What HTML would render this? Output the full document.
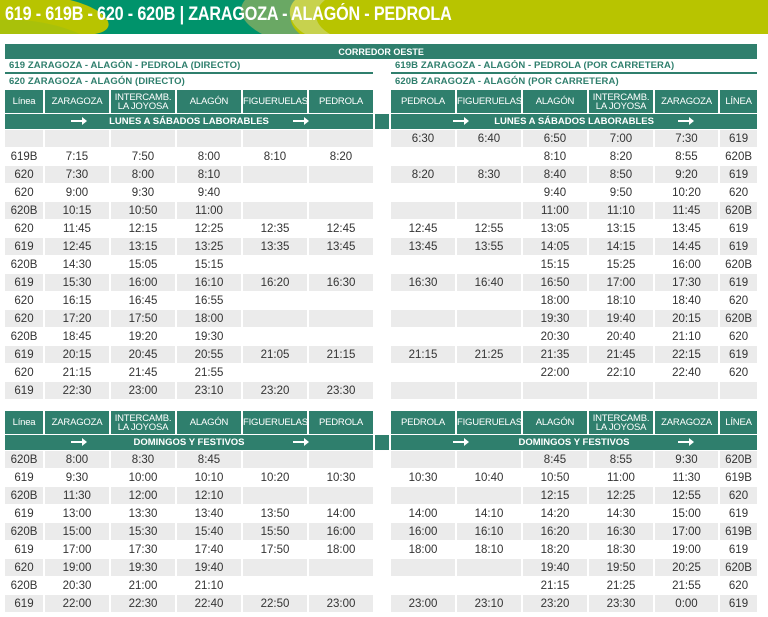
<!DOCTYPE html>
<html><head><meta charset="utf-8"><style>
*{margin:0;padding:0;box-sizing:border-box}
body{width:768px;height:617px;background:#fff;position:relative;overflow:hidden;font-family:"Liberation Sans",sans-serif;color:#333}
#hdr{position:absolute;left:0;top:0;width:768px;height:34px}
#ttl{position:absolute;left:5px;top:4px;color:#fff;font-weight:bold;font-size:19px;white-space:nowrap;transform:scaleX(0.85);transform-origin:0 0;letter-spacing:-0.2px}
table{position:absolute;left:3px;border-collapse:separate;border-spacing:2px 1px;table-layout:fixed;width:756px}
td{height:17px;text-align:center;font-size:11.5px;padding:0;overflow:hidden;white-space:nowrap}
tr.g td{background:#ebebeb}
tr.g td.x,tr td.x{background:#fff}
tr.h td{background:#2f7f6d;color:#fff;font-size:9.5px;height:23px;line-height:9px;letter-spacing:-0.2px}
tr.h td.x{background:#fff}
tr.b td{background:#2f7f6d;color:#fff;font-size:9.5px;font-weight:bold;height:15px;position:relative}
tr.c td{background:#2f7f6d;color:#fff;font-size:9px;font-weight:bold;height:15px}
tr.s td{color:#2f7f6d;font-size:9.5px;font-weight:bold;text-align:left;padding-left:4px;height:14px;line-height:12px;letter-spacing:0.1px}
tr.s1 td.l{border-bottom:2px solid #2f7f6d}
.ar{position:absolute;top:3px;width:16px;height:8px}
</style></head><body>
<div id="hdr"><svg width="768" height="34"><rect width="768" height="34" fill="#b8c400"/><path d="M70 0 C110 10 120 30 95 34 L270 34 C250 22 240 10 255 0 Z" fill="#00936b"/><path d="M245 0 C235 12 245 25 262 34 L300 34 C285 22 290 8 300 0 Z" fill="#6aa864"/><path d="M295 0 C285 10 290 25 305 34 L330 34 C310 22 315 8 325 0Z" fill="#c7d24e"/><path d="M0 20 C30 18 60 25 80 34 L0 34Z" fill="#a9c10a"/></svg>
<div id="ttl">619 - 619B - 620 - 620B | ZARAGOZA - ALAGÓN - PEDROLA</div></div>

<table style="top:43px">
<colgroup><col style="width:38px"><col style="width:64px"><col style="width:64px"><col style="width:64px"><col style="width:64px"><col style="width:64px"><col style="width:14px"><col style="width:64px"><col style="width:64px"><col style="width:64px"><col style="width:64px"><col style="width:63px"><col style="width:37px"></colgroup>
<tr class="c"><td colspan="13">CORREDOR OESTE</td></tr>
<tr class="s s1"><td colspan="6" class="l">619 ZARAGOZA - ALAGÓN - PEDROLA (DIRECTO)</td><td></td><td colspan="6" class="l">619B ZARAGOZA - ALAGÓN - PEDROLA (POR CARRETERA)</td></tr>
<tr class="s"><td colspan="6">620 ZARAGOZA - ALAGÓN (DIRECTO)</td><td></td><td colspan="6">620B ZARAGOZA - ALAGÓN (POR CARRETERA)</td></tr>
<tr class="h"><td>Línea</td><td>ZARAGOZA</td><td>INTERCAMB.<br>LA JOYOSA</td><td>ALAGÓN</td><td>FIGUERUELAS</td><td>PEDROLA</td><td class="x"></td><td>PEDROLA</td><td>FIGUERUELAS</td><td>ALAGÓN</td><td>INTERCAMB.<br>LA JOYOSA</td><td>ZARAGOZA</td><td>LÍNEA</td></tr>
<tr class="b"><td colspan="6"><svg class="ar" style="left:66px" viewBox="0 0 16 8"><path d="M0 3h11V0l5 4-5 4V5H0z" fill="#fff"/></svg>LUNES A SÁBADOS LABORABLES<svg class="ar" style="left:288px" viewBox="0 0 16 8"><path d="M0 3h11V0l5 4-5 4V5H0z" fill="#fff"/></svg></td><td></td><td colspan="6"><svg class="ar" style="left:62px" viewBox="0 0 16 8"><path d="M0 3h11V0l5 4-5 4V5H0z" fill="#fff"/></svg>LUNES A SÁBADOS LABORABLES<svg class="ar" style="left:287px" viewBox="0 0 16 8"><path d="M0 3h11V0l5 4-5 4V5H0z" fill="#fff"/></svg></td></tr>
<tr class="g"><td></td><td></td><td></td><td></td><td></td><td></td><td class="x"></td><td>6:30</td><td>6:40</td><td>6:50</td><td>7:00</td><td>7:30</td><td>619</td></tr>
<tr><td>619B</td><td>7:15</td><td>7:50</td><td>8:00</td><td>8:10</td><td>8:20</td><td class="x"></td><td></td><td></td><td>8:10</td><td>8:20</td><td>8:55</td><td>620B</td></tr>
<tr class="g"><td>620</td><td>7:30</td><td>8:00</td><td>8:10</td><td></td><td></td><td class="x"></td><td>8:20</td><td>8:30</td><td>8:40</td><td>8:50</td><td>9:20</td><td>619</td></tr>
<tr><td>620</td><td>9:00</td><td>9:30</td><td>9:40</td><td></td><td></td><td class="x"></td><td></td><td></td><td>9:40</td><td>9:50</td><td>10:20</td><td>620</td></tr>
<tr class="g"><td>620B</td><td>10:15</td><td>10:50</td><td>11:00</td><td></td><td></td><td class="x"></td><td></td><td></td><td>11:00</td><td>11:10</td><td>11:45</td><td>620B</td></tr>
<tr><td>620</td><td>11:45</td><td>12:15</td><td>12:25</td><td>12:35</td><td>12:45</td><td class="x"></td><td>12:45</td><td>12:55</td><td>13:05</td><td>13:15</td><td>13:45</td><td>619</td></tr>
<tr class="g"><td>619</td><td>12:45</td><td>13:15</td><td>13:25</td><td>13:35</td><td>13:45</td><td class="x"></td><td>13:45</td><td>13:55</td><td>14:05</td><td>14:15</td><td>14:45</td><td>619</td></tr>
<tr><td>620B</td><td>14:30</td><td>15:05</td><td>15:15</td><td></td><td></td><td class="x"></td><td></td><td></td><td>15:15</td><td>15:25</td><td>16:00</td><td>620B</td></tr>
<tr class="g"><td>619</td><td>15:30</td><td>16:00</td><td>16:10</td><td>16:20</td><td>16:30</td><td class="x"></td><td>16:30</td><td>16:40</td><td>16:50</td><td>17:00</td><td>17:30</td><td>619</td></tr>
<tr><td>620</td><td>16:15</td><td>16:45</td><td>16:55</td><td></td><td></td><td class="x"></td><td></td><td></td><td>18:00</td><td>18:10</td><td>18:40</td><td>620</td></tr>
<tr class="g"><td>620</td><td>17:20</td><td>17:50</td><td>18:00</td><td></td><td></td><td class="x"></td><td></td><td></td><td>19:30</td><td>19:40</td><td>20:15</td><td>620B</td></tr>
<tr><td>620B</td><td>18:45</td><td>19:20</td><td>19:30</td><td></td><td></td><td class="x"></td><td></td><td></td><td>20:30</td><td>20:40</td><td>21:10</td><td>620</td></tr>
<tr class="g"><td>619</td><td>20:15</td><td>20:45</td><td>20:55</td><td>21:05</td><td>21:15</td><td class="x"></td><td>21:15</td><td>21:25</td><td>21:35</td><td>21:45</td><td>22:15</td><td>619</td></tr>
<tr><td>620</td><td>21:15</td><td>21:45</td><td>21:55</td><td></td><td></td><td class="x"></td><td></td><td></td><td>22:00</td><td>22:10</td><td>22:40</td><td>620</td></tr>
<tr class="g"><td>619</td><td>22:30</td><td>23:00</td><td>23:10</td><td>23:20</td><td>23:30</td><td class="x"></td><td></td><td></td><td></td><td></td><td></td><td></td></tr>
</table>

<table style="top:410px">
<colgroup><col style="width:38px"><col style="width:64px"><col style="width:64px"><col style="width:64px"><col style="width:64px"><col style="width:64px"><col style="width:14px"><col style="width:64px"><col style="width:64px"><col style="width:64px"><col style="width:64px"><col style="width:63px"><col style="width:37px"></colgroup>
<tr class="h"><td>Línea</td><td>ZARAGOZA</td><td>INTERCAMB.<br>LA JOYOSA</td><td>ALAGÓN</td><td>FIGUERUELAS</td><td>PEDROLA</td><td class="x"></td><td>PEDROLA</td><td>FIGUERUELAS</td><td>ALAGÓN</td><td>INTERCAMB.<br>LA JOYOSA</td><td>ZARAGOZA</td><td>LÍNEA</td></tr>
<tr class="b"><td colspan="6"><svg class="ar" style="left:66px" viewBox="0 0 16 8"><path d="M0 3h11V0l5 4-5 4V5H0z" fill="#fff"/></svg>DOMINGOS Y FESTIVOS<svg class="ar" style="left:288px" viewBox="0 0 16 8"><path d="M0 3h11V0l5 4-5 4V5H0z" fill="#fff"/></svg></td><td></td><td colspan="6"><svg class="ar" style="left:62px" viewBox="0 0 16 8"><path d="M0 3h11V0l5 4-5 4V5H0z" fill="#fff"/></svg>DOMINGOS Y FESTIVOS<svg class="ar" style="left:287px" viewBox="0 0 16 8"><path d="M0 3h11V0l5 4-5 4V5H0z" fill="#fff"/></svg></td></tr>
<tr class="g"><td>620B</td><td>8:00</td><td>8:30</td><td>8:45</td><td></td><td></td><td class="x"></td><td></td><td></td><td>8:45</td><td>8:55</td><td>9:30</td><td>620B</td></tr>
<tr><td>619</td><td>9:30</td><td>10:00</td><td>10:10</td><td>10:20</td><td>10:30</td><td class="x"></td><td>10:30</td><td>10:40</td><td>10:50</td><td>11:00</td><td>11:30</td><td>619B</td></tr>
<tr class="g"><td>620B</td><td>11:30</td><td>12:00</td><td>12:10</td><td></td><td></td><td class="x"></td><td></td><td></td><td>12:15</td><td>12:25</td><td>12:55</td><td>620</td></tr>
<tr><td>619</td><td>13:00</td><td>13:30</td><td>13:40</td><td>13:50</td><td>14:00</td><td class="x"></td><td>14:00</td><td>14:10</td><td>14:20</td><td>14:30</td><td>15:00</td><td>619</td></tr>
<tr class="g"><td>620B</td><td>15:00</td><td>15:30</td><td>15:40</td><td>15:50</td><td>16:00</td><td class="x"></td><td>16:00</td><td>16:10</td><td>16:20</td><td>16:30</td><td>17:00</td><td>619B</td></tr>
<tr><td>619</td><td>17:00</td><td>17:30</td><td>17:40</td><td>17:50</td><td>18:00</td><td class="x"></td><td>18:00</td><td>18:10</td><td>18:20</td><td>18:30</td><td>19:00</td><td>619</td></tr>
<tr class="g"><td>620</td><td>19:00</td><td>19:30</td><td>19:40</td><td></td><td></td><td class="x"></td><td></td><td></td><td>19:40</td><td>19:50</td><td>20:25</td><td>620B</td></tr>
<tr><td>620B</td><td>20:30</td><td>21:00</td><td>21:10</td><td></td><td></td><td class="x"></td><td></td><td></td><td>21:15</td><td>21:25</td><td>21:55</td><td>620</td></tr>
<tr class="g"><td>619</td><td>22:00</td><td>22:30</td><td>22:40</td><td>22:50</td><td>23:00</td><td class="x"></td><td>23:00</td><td>23:10</td><td>23:20</td><td>23:30</td><td>0:00</td><td>619</td></tr>
</table>
</body></html>
